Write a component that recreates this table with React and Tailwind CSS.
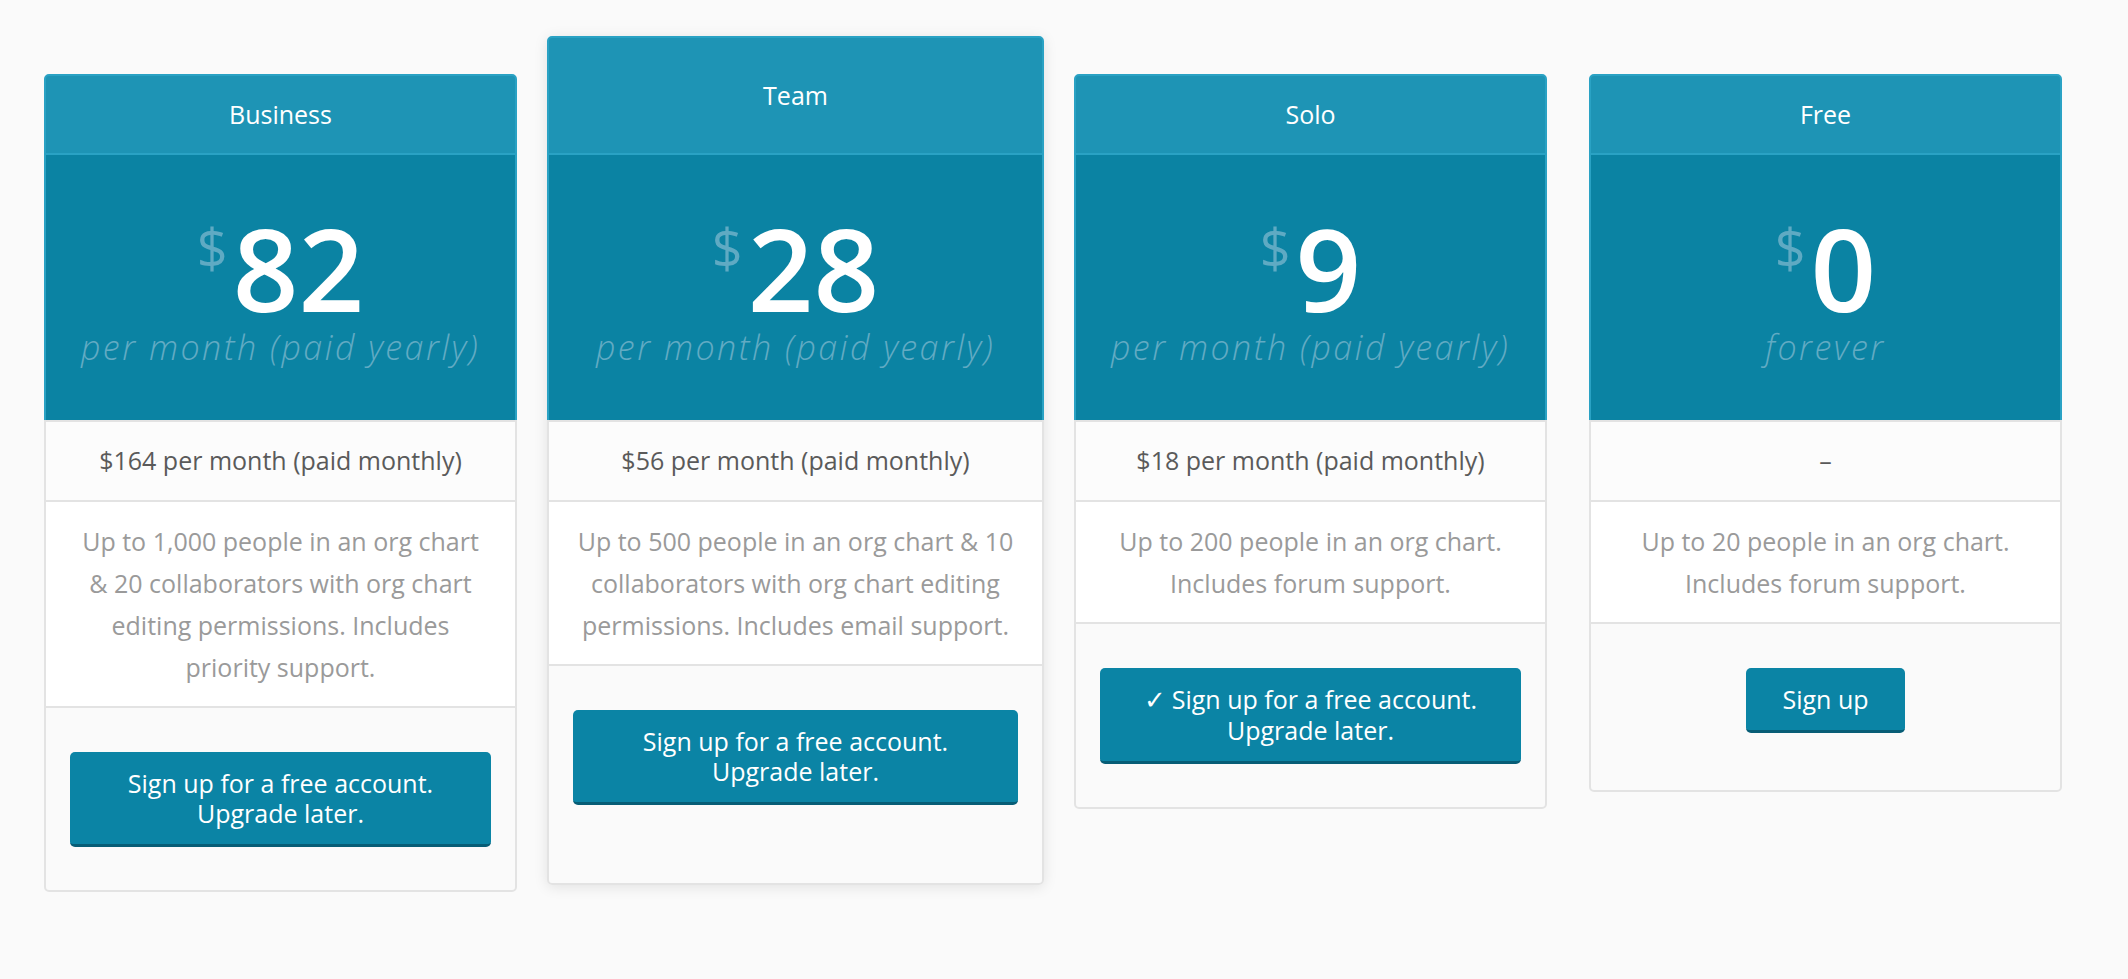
import React from "react";

const plans = [
  {
    name: "Business",
    price: "82",
    period: "per month (paid yearly)",
    monthly: "$164 per month (paid monthly)",
    desc: [
      "Up to 1,000 people in an org chart",
      "& 20 collaborators with org chart",
      "editing permissions. Includes",
      "priority support.",
    ],
    button: ["Sign up for a free account.", "Upgrade later."],
  },
  {
    name: "Team",
    featured: true,
    price: "28",
    period: "per month (paid yearly)",
    monthly: "$56 per month (paid monthly)",
    desc: [
      "Up to 500 people in an org chart & 10",
      "collaborators with org chart editing",
      "permissions. Includes email support.",
    ],
    button: ["Sign up for a free account.", "Upgrade later."],
  },
  {
    name: "Solo",
    price: "9",
    period: "per month (paid yearly)",
    monthly: "$18 per month (paid monthly)",
    desc: ["Up to 200 people in an org chart.", "Includes forum support."],
    button: ["Sign up for a free account.", "Upgrade later."],
    check: true,
  },
  {
    name: "Free",
    price: "0",
    period: "forever",
    monthly: "–",
    desc: ["Up to 20 people in an org chart.", "Includes forum support."],
    button: ["Sign up"],
    small: true,
  },
];

function Card({ plan }) {
  const f = plan.featured;
  let pb = "pb-[43px]";
  if (f) pb = "pb-[78px]";
  if (plan.small) pb = "pb-[57px]";
  return (
    <div
      className={
        f
          ? "mx-[9px] mt-0 rounded-[5px] shadow-[0_2px_14px_rgba(0,0,0,0.10)]"
          : "mx-[21px] mt-[38px] rounded-[5px]"
      }
    >
      <div
        className={
          "flex items-center justify-center rounded-t-[5px] border-x-2 border-t-2 border-b-2 border-[#2aa2c4] bg-[#1e94b5] text-[25px] text-white " +
          (f ? "h-[119px]" : "h-[81px]")
        }
      >
        {plan.name}
      </div>
      <div className="flex h-[265px] flex-col items-center border-x-2 border-[#2aa2c4] bg-[#0b83a3] pt-[55px]">
        <div className="flex items-start">
          <span className="mr-[5px] mt-[10px] text-[54px] leading-none text-[#5faac3]">$</span>
          <span className="text-[115px] font-semibold leading-none text-white">{plan.price}</span>
        </div>
        <div className="mt-[2px] text-[34px] font-light italic leading-[40px] tracking-[2.5px] text-[#62abc3]">
          {plan.period}
        </div>
      </div>
      <div className="flex h-[80px] items-center justify-center border-x-2 border-t-2 border-[#e3e3e3] bg-[#fcfcfc] text-[25px] text-[#5a5a5a]">
        {plan.monthly}
      </div>
      <div className="border-x-2 border-t-2 border-[#e3e3e3] bg-white px-[6px] py-[18px] text-center text-[25px] leading-[42px] text-[#9a9a9a]">
        {plan.desc.map((l, i) => (
          <div key={i} className="whitespace-nowrap">
            {l}
          </div>
        ))}
      </div>
      <div
        className={
          "flex justify-center rounded-b-[5px] border-x-2 border-y-2 border-[#e3e3e3] bg-[#fafafa] px-[24px] pt-[44px] " +
          pb
        }
      >
        <div
          className={
            "rounded-[5px] border-b-[3px] border-[#075d76] bg-[#0b84a5] text-center text-[25px] leading-[30px] text-white " +
            (plan.small ? "px-[36px] pt-[16px] pb-[16px]" : "w-full pt-[16px] pb-[16px]")
          }
        >
          {plan.button.map((l, i) => (
            <div key={i} className="whitespace-nowrap">
              {i === 0 && plan.check ? (
                <span className="mr-[6px] font-['DejaVu_Sans'] text-[26px] font-bold">✓</span>
              ) : null}
              {l}
            </div>
          ))}
        </div>
      </div>
    </div>
  );
}

export default function App() {
  return (
    <div className="min-h-screen bg-[#fafafa] pl-[23px] pt-[36px] font-['Open_Sans',sans-serif]">
      <div className="grid w-[2060px] grid-cols-[515px_515px_515px_515px] items-start">
        {plans.map((p) => (
          <Card key={p.name} plan={p} />
        ))}
      </div>
    </div>
  );
}
